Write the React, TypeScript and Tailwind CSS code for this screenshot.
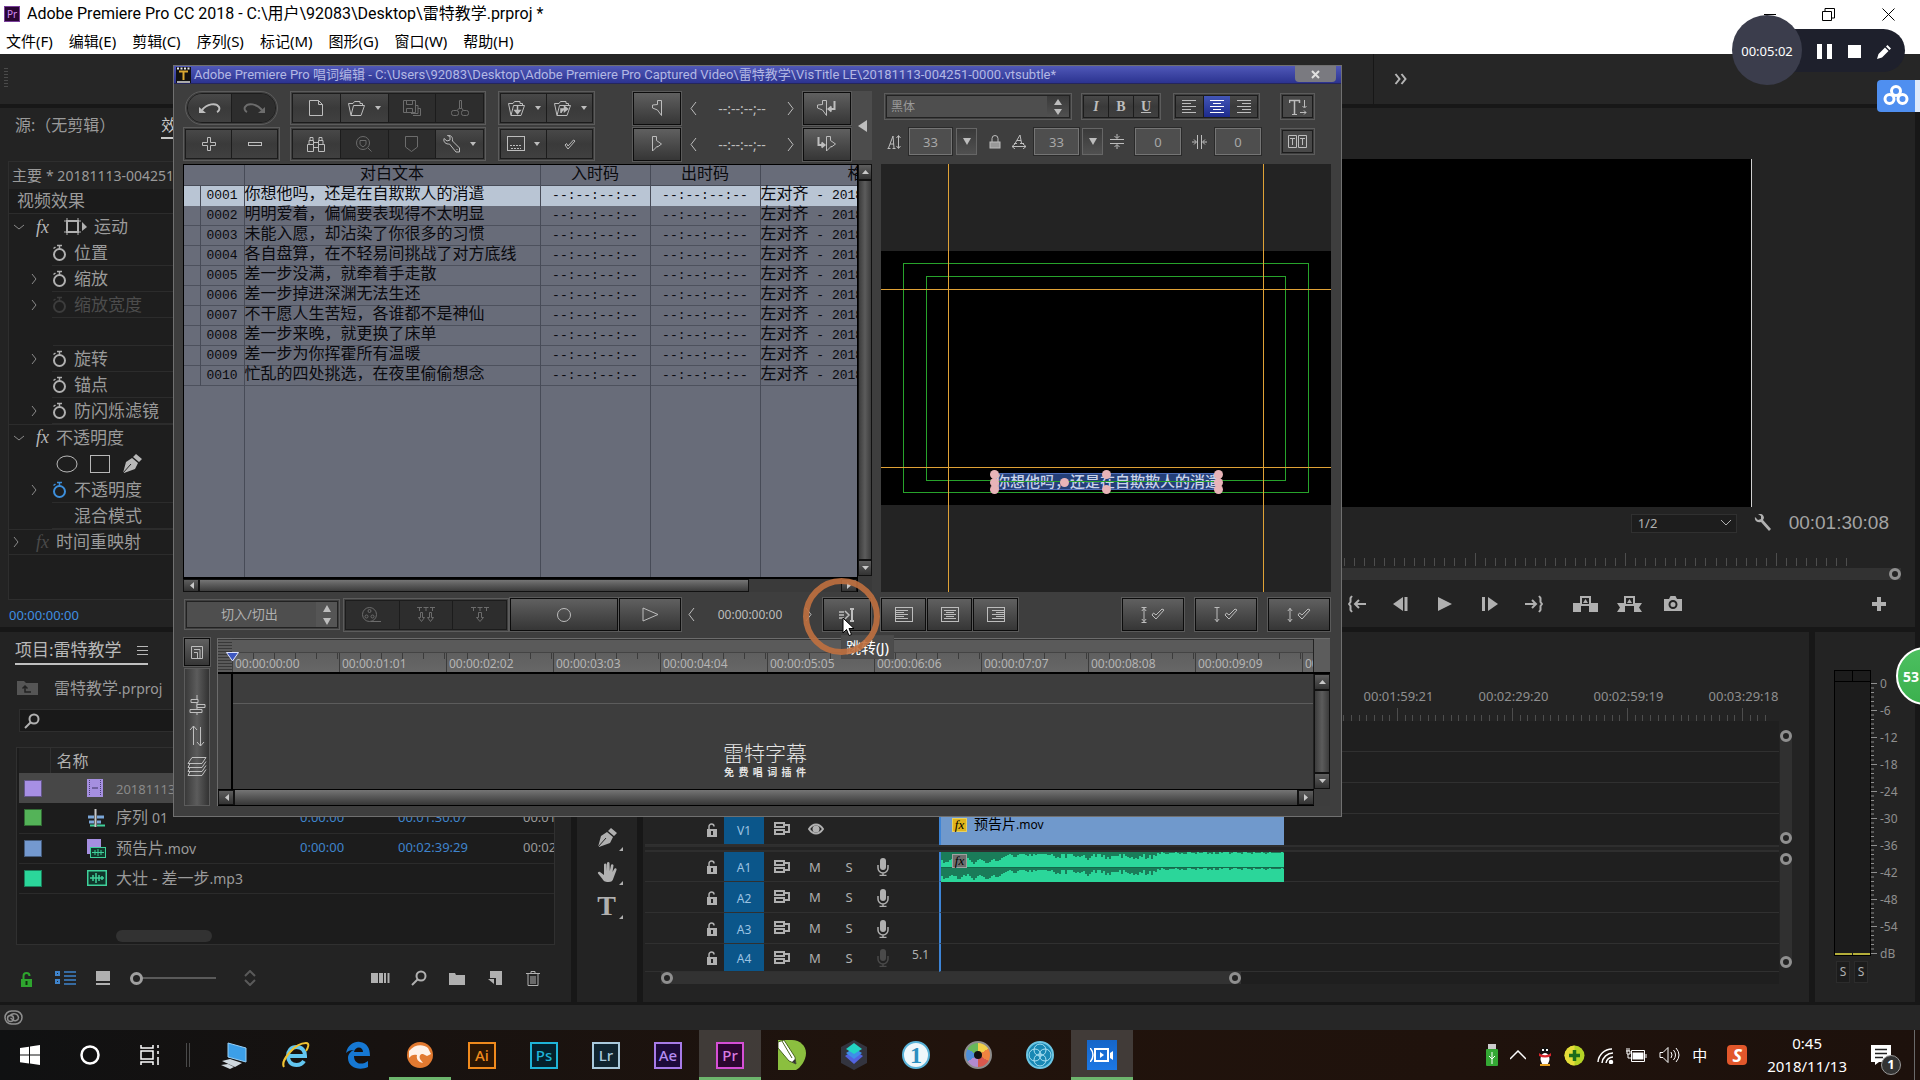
import React from "react";
import type { ReactNode } from "react";

const UI = "font-['Noto_Sans','Noto_Sans_CJK_SC',sans-serif]";
const MONO = "font-['Liberation_Mono','Noto_Sans_CJK_SC',monospace]";

function Ic({ w = 20, h = 20, sw = 1, className = "", children }: { w?: number; h?: number; sw?: number; className?: string; children: ReactNode }) {
  return (
    <svg width={w} height={h} viewBox={`0 0 ${w} ${h}`} fill="none" stroke="currentColor" strokeWidth={sw} className={`shrink-0 ${className}`} aria-hidden="true">
      {children}
    </svg>
  );
}

function Ticks({ start, step, count, major, offset = 0, short, tall }: { start: number; step: number; count: number; major: number; offset?: number; short: number; tall: number }) {
  const items = Array.from({ length: count }, (_, i) => i);
  return (
    <svg className="block w-full overflow-hidden" height={tall} aria-hidden="true">
      {items.map((i) => {
        const x = Math.round(start + i * step) + 0.5;
        const len = (i + offset) % major === 0 ? tall : short;
        return <line key={i} x1={x} x2={x} y1={tall - len} y2={tall} stroke="currentColor" />;
      })}
    </svg>
  );
}

/* ---------- application chrome ---------- */

function TitleBar() {
  const menus = ["文件(F)", "编辑(E)", "剪辑(C)", "序列(S)", "标记(M)", "图形(G)", "窗口(W)", "帮助(H)"];
  return (
    <header className="h-[54px] shrink-0 bg-white text-black">
      <div className="flex h-7 items-center gap-[7px] pl-1">
        <span className="flex h-4 w-4 items-center justify-center border border-[#7a3f9c] bg-[#2a0634] text-[10px] leading-none text-[#d58cf5]">Pr</span>
        <h1 className="flex-1 font-['Roboto','Noto_Sans_CJK_SC',sans-serif] text-[16px] leading-5">Adobe Premiere Pro CC 2018 - C:\用户\92083\Desktop\雷特教学.prproj *</h1>
        <div className="flex items-center pr-[25px]">
          <button aria-label="最小化" className="mr-[46px]"><Ic w={12} h={12}><path d="M0 6.5h12" /></Ic></button>
          <button aria-label="向下还原" className="mr-[47px]"><Ic w={13} h={13}><path d="M.5 3.5h9v9h-9zM3 3V.5h9.500V10H10" /></Ic></button>
          <button aria-label="关闭"><Ic w={13} h={13}><path d="M.5.5l12 12M12.500.5l-12 12" /></Ic></button>
        </div>
      </div>
      <nav className="flex gap-4 pt-px pl-[6px]">
        {menus.map((m) => (
          <button key={m} className="text-[15px] leading-6">{m}</button>
        ))}
      </nav>
    </header>
  );
}

function WorkspaceBar() {
  return (
    <div className="flex h-[54px] shrink-0 border-b-4 border-[#171717] bg-[#262626]">
      <div className="mt-[14px] ml-1 h-5 w-1 bg-[repeating-linear-gradient(#4a4a4a_0_1px,transparent_1px_3px)]" />
      <div className="ml-auto w-[547px] border-l border-[#171717] pt-[18px] pl-5">
        <button aria-label="更多工作区" className="block text-[#b4b4b4]"><Ic w={14} h={14} sw={2}><path d="M1.500 2l4 5-4 5M7.500 2l4 5-4 5" /></Ic></button>
      </div>
    </div>
  );
}

/* ---------- effect controls ---------- */

const Stopwatch = ({ className = "text-[#b0b0b0]" }: { className?: string }) => (
  <Ic w={15} h={18} sw={2} className={className}><circle cx="7.500" cy="10.500" r="5.500" /><path d="M7.500 5V1M5 1.500h5M1.500 4.500l2-1.500" strokeWidth={1.500} /></Ic>
);
const Chevron = ({ open = false }: { open?: boolean }) => (
  <Ic w={10} h={12} className="text-[#8a8a8a]">{open ? <path d="M0 4l5 4 5-4" /> : <path d="M2 1l4 5-4 5" />}</Ic>
);
const Fx = ({ dim = false }: { dim?: boolean }) => (
  <span className={dim ? "w-4 font-['Liberation_Serif',serif] text-[18px] italic text-[#4a4a4a]" : "w-4 font-['Liberation_Serif',serif] text-[18px] italic text-[#b8b8b8]"}>fx</span>
);

function Prop({ label, arrow = false, dim = false, active = false, watch = true }: { label: string; arrow?: boolean; dim?: boolean; active?: boolean; watch?: boolean }) {
  return (
    <div className="flex h-[26px] items-center pl-[21px]">
      <span className="w-[22px]">{arrow && <Chevron />}</span>
      <span className="flex h-full flex-1 items-center border-b border-[#2c2c2c]">
        <span className="w-[22px]">{watch && <Stopwatch className={dim ? "text-[#3c3c3c]" : active ? "text-[#3d8fdc]" : "text-[#b0b0b0]"} />}</span>
        <span className={dim ? "text-[#4c4c4c]" : ""}>{label}</span>
      </span>
    </div>
  );
}

function EffectControls() {
  return (
    <section className="flex w-[571px] shrink-0 flex-col bg-[#232323] text-[#9a9a9a]">
      <div className="flex h-[53px] shrink-0 gap-[46px] pt-[5px] pl-[15px] text-[16px] leading-6">
        <button className="h-6">源:（无剪辑）</button>
        <button className="h-[26px] border-b-2 border-[#c8c8c8] text-[#c8c8c8]">效果控件</button>
      </div>
      <div className="ml-2 flex min-h-0 flex-1 flex-col border border-[#2e2e2e] bg-[#1e1e1e] text-[17px]">
        <div className="flex h-[27px] items-center bg-[#232323] pl-[3px] whitespace-nowrap"><span className="text-[15px]">主要</span><span className="pl-1 text-[14px]">* 20181113-004251-0000</span></div>
        <div className="flex h-[25px] items-center border-b border-[#2c2c2c] bg-[#1b1b1b] pl-2">视频效果</div>
        <div className="flex h-[26px] items-center pl-[5px]">
          <span className="w-[22px]"><Chevron open /></span><Fx />
          <Ic w={24} h={18} sw={2} className="mr-[6px] ml-[12px] text-[#b0b0b0]"><rect x="3" y="3" width="11" height="11" /><path d="M0 3h6M3 0v6M11 3h6M14 0v6M0 14h6M3 11v6M11 14h6M14 11v6" strokeWidth={1} /><path d="M18 4v9l5-4z" fill="currentColor" stroke="none" /></Ic>
          运动
        </div>
        <Prop label="位置" />
        <Prop label="缩放" arrow />
        <Prop label="缩放宽度" arrow dim />
        <div className="ml-11 h-[28px] border-b border-[#2c2c2c]" />
        <Prop label="旋转" arrow />
        <Prop label="锚点" />
        <Prop label="防闪烁滤镜" arrow />
        <div className="flex h-[26px] items-center border-t border-[#2c2c2c] pl-[5px]">
          <span className="w-[22px]"><Chevron open /></span><Fx /><span className="ml-[4px]">不透明度</span>
        </div>
        <div className="flex h-[27px] items-center gap-3 pl-[47px] text-[#b8b8b8]">
          <Ic w={22} h={18}><ellipse cx="11" cy="9" rx="10" ry="8" /></Ic>
          <Ic w={20} h={18}><rect x=".5" y=".5" width="19" height="17" /></Ic>
          <PenIcon />
        </div>
        <Prop label="不透明度" arrow active />
        <Prop label="混合模式" watch={false} />
        <div className="flex h-[26px] items-center border-y border-[#2c2c2c] pl-[3px]">
          <span className="w-[24px]"><Chevron /></span><Fx dim /><span className="ml-[4px]">时间重映射</span>
        </div>
      </div>
      <div className="flex h-[27px] shrink-0 items-center pt-1 pl-[9px] text-[13px] text-[#3f8fe0]">00:00:00:00</div>
    </section>
  );
}

const PenIcon = () => (
  <Ic w={20} h={20}><path d="M1 19l3-11 6-4 6 5-3 6-11 4zM11 3l3-3 6 5-3 3z" fill="currentColor" stroke="none" /><path d="M1 19l8-9" stroke="#232323" /></Ic>
);

/* ---------- program monitor ---------- */

const Knob = ({ className = "" }: { className?: string }) => <span className={`block h-3 w-3 rounded-full border-[3px] border-[#8f8f8f] bg-[#232323] ${className}`} />;

function ProgramMonitor() {
  const tools: { name: string; icon: ReactNode; gap?: boolean }[] = [
    { name: "转到入点", icon: <Ic w={19} h={18} sw={2}><path d="M4 1L2.500 3v4L1 9l1.500 2v4L4 17M7 9h11M11 5L7 9l4 4" /></Ic> },
    { name: "后退一帧", icon: <Ic w={17} h={16}><path d="M0 8l10-7v14z" fill="currentColor" stroke="none" /><path d="M13 1v14" strokeWidth={3} /></Ic> },
    { name: "播放", icon: <Ic w={16} h={16}><path d="M1 1l14 7-14 7z" fill="currentColor" stroke="none" /></Ic> },
    { name: "前进一帧", icon: <Ic w={17} h={16}><path d="M7 1l10 7-10 7z" fill="currentColor" stroke="none" /><path d="M2.500 1v14" strokeWidth={3} /></Ic> },
    { name: "转到出点", icon: <Ic w={19} h={18} sw={2}><path d="M15 1l1.500 2v4L18 9l-1.500 2v4L15 17M1 9h11M8 5l4 4-4 4" /></Ic> },
    { name: "提升", gap: true, icon: <Ic w={25} h={18}><path d="M0 8h8v9H0zM16 8h9v9h-9z" fill="currentColor" stroke="none" /><rect x="8" y="2" width="9" height="8" strokeWidth={2} /><path d="M10 8l2.500-4L15 8z" fill="currentColor" stroke="none" /></Ic> },
    { name: "提取", icon: <Ic w={25} h={18}><path d="M0 8h8v9H0l3-4.500zM17 8h8l-3 4.500 3 4.500h-8z" fill="currentColor" stroke="none" /><rect x="8" y="2" width="9" height="8" strokeWidth={2} /><path d="M10 8l2.500-4L15 8z" fill="currentColor" stroke="none" /></Ic> },
    { name: "导出帧", icon: <Ic w={18} h={16}><path d="M0 3h5l1.500-3h5L13 3h5v12H0z" fill="currentColor" stroke="none" /><circle cx="9" cy="8.500" r="3.500" stroke="#232323" strokeWidth={2} /></Ic> },
  ];
  return (
    <section className="mr-[5px] flex flex-1 flex-col bg-[#232323]">
      <div className="h-[51px] shrink-0" />
      <div className="mr-[163px] ml-[160px] min-h-0 flex-1 border-r border-[#d0d0d0] bg-black" />
      <div className="flex h-8 shrink-0 items-center justify-end pr-[26px] text-[#b0b0b0]">
        <div className="relative mr-[17px]">
          <select aria-label="回放分辨率" className="block h-[19px] w-[106px] appearance-none border border-[#303030] bg-[#1d1d1d] pl-[6px] text-[13px] leading-4">
            <option>1/2</option>
          </select>
          <Ic w={10} h={6} className="pointer-events-none absolute top-[6px] right-[6px]"><path d="M0 0l5 5 5-5" /></Ic>
        </div>
        <button aria-label="设置" className="mr-[17px]"><Ic w={18} h={18}><path d="M1 3l3 3 3-1 0-3-3-2c3-1 6 1 6 4l-1 2 8 9-2 2-8-9C4 9 0 7 1 3z" fill="currentColor" stroke="none" /></Ic></button>
        <output className="font-['Liberation_Sans',sans-serif] text-[19px] text-[#a4a4a4]">00:01:30:08</output>
      </div>
      <div className="mt-[14px] text-[#4d4d4d]"><Ticks start={5} step={10.04} count={127} major={15} offset={1} short={8} tall={13} /></div>
      <div className="mt-[2px] mr-[14px] flex h-3 shrink-0 items-center justify-end bg-[#323232]"><Knob /></div>
      <div className="mt-[6px] flex h-[41px] shrink-0 items-center justify-end pr-7 pb-[6px] text-[#b0b0b0]">
        {tools.map((t) => (
          <button key={t.name} aria-label={t.name} className={t.gap ? "ml-2 flex w-11 justify-center" : "flex w-11 justify-center"}>{t.icon}</button>
        ))}
        <button aria-label="按钮编辑器" className="ml-[176px]"><Ic w={16} h={16} sw={4}><path d="M8 1v14M1 8h14" /></Ic></button>
      </div>
    </section>
  );
}

/* ---------- project panel ---------- */

type Clip = { color: string; name: ReactNode; key: string; icon: ReactNode; start: string; end: string; out: string; selected?: boolean };
const Film = () => <Ic w={16} h={18}><rect x="0" y="0" width="16" height="18" fill="#a58fe0" stroke="none" /><path d="M2.500 1v16M13.500 1v16" stroke="#4a3d78" strokeDasharray="1 1" /><path d="M5 9h6" stroke="#3a3060" /></Ic>;
const clips: Clip[] = [
  { key: "c1", color: "bg-[#a78fe4]", name: <span className="text-[13px]">20181113-004251</span>, icon: <Film />, start: "", end: "", out: "", selected: true },
  { key: "c2", color: "bg-[#54b358]", name: <>序列<span className="pl-1 text-[14px]">01</span></>, icon: <Ic w={18} h={18} sw={3}><path d="M1 8h6M2 13h5" stroke="#7aa6d8" /><path d="M10 8h7M10 13h4" stroke="#7aa6d8" /><path d="M3 16.500h5M10 16.500h8" stroke="#3fd09a" strokeWidth={2} /><path d="M8.500 0v18" stroke="#c9c9c9" strokeWidth={2} /></Ic>, start: "0:00:00", end: "00:01:30:07", out: "00:01:30" },
  { key: "c3", color: "bg-[#7499cf]", name: <>预告片<span className="text-[14px]">.mov</span></>, icon: <Ic w={19} h={19}><rect width="14" height="15" fill="#a58fe0" stroke="none" /><rect x="3.500" y="8.500" width="15" height="10" fill="#123a2c" stroke="#3fd09a" /><path d="M5 13.500h12M8 11v5M11 10v7M14 11v5" stroke="#3fd09a" /></Ic>, start: "0:00:00", end: "00:02:39:29", out: "00:02:39" },
  { key: "c4", color: "bg-[#2bd69a]", name: <>大壮 - 差一步<span className="text-[14px]">.mp3</span></>, icon: <Ic w={20} h={16}><rect x=".5" y=".5" width="19" height="15" fill="#10352a" stroke="#3fd09a" strokeWidth={2} /><path d="M3 8h14M6 5v6M9 3v10M12 5v6M15 6v4" stroke="#3fd09a" strokeWidth={1.500} /></Ic>, start: "", end: "", out: "" },
];

function ProjectPanel() {
  const act = "flex w-[17px] justify-center";
  return (
    <section className="flex w-[571px] shrink-0 flex-col bg-[#232323] text-[#9a9a9a]">
      <div className="flex h-[34px] shrink-0 items-start pt-[5px] pl-[15px]">
        <button className="flex h-[28px] items-center gap-[15px] border-b-2 border-[#c0c0c0] text-[17px] text-[#b8b8b8]">项目:雷特教学
          <Ic w={11} h={10}><path d="M0 1.500h11M0 5.500h11M0 9.500h11" /></Ic>
        </button>
      </div>
      <div className="flex h-[43px] items-center gap-[16px] pl-[17px] text-[16px]">
        <Ic w={21} h={15} className="text-[#555]"><path d="M0 1h7l2 2h12v12H0z" fill="currentColor" stroke="none" /><path d="M14 12H8V6M5.500 8.500L8 6l2.500 2.500" stroke="#222" strokeWidth={1.500} /></Ic>
        <span>雷特教学<span className="text-[14px]">.prproj</span></span>
      </div>
      <label className="mr-4 ml-[19px] flex h-[23px] items-center gap-3 border border-[#2e2e2e] bg-[#191919] pl-[4px] text-[#b0b0b0]">
        <Ic w={16} h={16} sw={2}><circle cx="10" cy="6" r="4.500" /><path d="M6.500 9.500L1 15" /></Ic>
        <input aria-label="搜索项目" className="flex-1 bg-transparent text-[13px] outline-none" />
      </label>
      <div className="mt-[15px] mr-4 ml-4 flex min-h-0 flex-1 flex-col overflow-hidden border border-[#303030] bg-[#1c1c1c] pl-[2px]">
        <table className="w-full table-fixed border-collapse text-left text-[16px] whitespace-nowrap">
          <colgroup><col className="w-[31px]" /><col className="w-[250px]" /><col className="w-[98px]" /><col className="w-[125px]" /><col /></colgroup>
          <thead>
            <tr className="h-[25px] bg-[#222]">
              <th className="border-r border-[#303030]" aria-label="标签" /><th className="pl-[6px] font-normal text-[#b0b0b0]">名称</th>
              <th aria-label="媒体开始" /><th aria-label="媒体结束" /><th aria-label="持续时间" />
            </tr>
          </thead>
          <tbody>
            {clips.map((c) => (
              <tr key={c.key} className={c.selected ? "h-[30px] bg-[#474747]" : "h-[30px] border-b border-[#2b2b2b]"}>
                <td className="pl-[5px]"><span className={`block h-[17px] w-[18px] border border-black/40 ${c.color}`} /></td>
                <td className={c.selected ? "overflow-hidden text-[#8a8a8a]" : "overflow-hidden"}>
                  <span className="flex items-center pl-[37px] leading-6"><span className="w-[29px]">{c.icon}</span><span>{c.name}</span></span>
                </td>
                <td className="text-[13px] text-[#3f84cc]">{c.start}</td>
                <td className="text-[13px] text-[#3f84cc]">{c.end}</td>
                <td className="overflow-hidden text-[13px]">{c.out}</td>
              </tr>
            ))}
          </tbody>
        </table>
        <div className="mt-auto mb-[2px] ml-[97px] h-3 w-24 shrink-0 rounded-full bg-[#323232]" />
      </div>
      <div className="flex h-[57px] shrink-0 items-center pt-[9px] pr-[30px] pl-5 text-[#b0b0b0]">
        <button aria-label="项目可写" className="mt-[2px] mr-[22px] text-[#2ea52e]"><Ic w={13} h={15}><rect x="1" y="7" width="11" height="8" fill="currentColor" stroke="none" /><path d="M3.500 7V4a3 3 0 0 1 6 0" strokeWidth={2} /><path d="M6.500 9v4" stroke="#10300f" strokeWidth={2} /></Ic></button>
        <button aria-label="列表视图" className="mr-5 text-[#3f84cc]"><Ic w={21} h={14} sw={2}><rect x="1" y="1" width="3" height="3" /><rect x="1" y="9" width="3" height="3" /><path d="M9 1h12M9 5h12M9 9h12M9 13h12" strokeWidth={1.500} /></Ic></button>
        <button aria-label="图标视图" className="mr-5"><Ic w={14} h={14}><path d="M0 0h14v10H0zM0 12h14v2H0z" fill="currentColor" stroke="none" /></Ic></button>
        <input type="range" aria-label="缩放" min={0} max={100} defaultValue={0} className="h-3 w-[86px] appearance-none bg-[linear-gradient(#5a5a5a,#5a5a5a)] bg-[length:100%_2px] bg-center bg-no-repeat [&::-webkit-slider-thumb]:h-[13px] [&::-webkit-slider-thumb]:w-[13px] [&::-webkit-slider-thumb]:appearance-none [&::-webkit-slider-thumb]:rounded-full [&::-webkit-slider-thumb]:border-[3px] [&::-webkit-slider-thumb]:border-[#a0a0a0] [&::-webkit-slider-thumb]:bg-[#232323]" />
        <button aria-label="排序" className="ml-7 text-[#5a5a5a]"><Ic w={12} h={16} sw={2}><path d="M1 6l5-5 5 5M1 10l5 5 5-5" /></Ic></button>
        <div className="ml-auto flex items-center gap-[21px]">
          <button aria-label="自动匹配序列" className={act}><Ic w={19} h={12}><path d="M0 1h7v10H0zM8 1h4v10H8zM13 1h2v10h-2zM16.500 1h2v10h-2z" fill="currentColor" stroke="none" /></Ic></button>
          <button aria-label="查找" className={act}><Ic w={16} h={16} sw={2}><circle cx="10" cy="6" r="4.500" /><path d="M6.500 9.500L1 15" /></Ic></button>
          <button aria-label="新建素材箱" className={act}><Ic w={16} h={13}><path d="M0 1h6l1 2h9v10H0z" fill="currentColor" stroke="none" /></Ic></button>
          <button aria-label="新建项" className={act}><Ic w={14} h={14}><path d="M2 0h12v14H8V7H2z" fill="currentColor" stroke="none" /><path d="M0 8h6v5z" fill="currentColor" stroke="none" /></Ic></button>
          <button aria-label="清除" className={act}><Ic w={14} h={15}><path d="M0 2.500h14M5 2V.5h4V2M2 3v11.500h10V3M5 5v8M7 5v8M9 5v8" /></Ic></button>
        </div>
      </div>
    </section>
  );
}

function ToolsPanel() {
  const corner = <Ic w={4} h={4} className="mt-auto -mb-[3px] ml-[2px]"><path d="M4 0v4H0z" fill="currentColor" stroke="none" /></Ic>;
  return (
    <aside aria-label="工具" className="flex w-[60px] shrink-0 flex-col items-center justify-end gap-[14px] bg-[#232323] pb-[86px] pl-[5px] text-[#b0b0b0]">
      <button aria-label="钢笔工具" className="flex"><PenIcon />{corner}</button>
      <button aria-label="手形工具" className="flex">
        <Ic w={20} h={20}><path d="M3 10l4 3V2.500a1.300 1.300 0 0 1 2.500 0V9l.5-8a1.300 1.300 0 0 1 2.500 0l.3 8 1.200-6a1.300 1.300 0 0 1 2.500.5L15.500 10l1.700-3a1.200 1.200 0 0 1 2.300 1l-3 8c-1 3-2 4-5 4-4 0-5-1-6-3L1 11.500c-.6-1.500 1-2.300 2-1.500z" fill="currentColor" stroke="none" /></Ic>{corner}
      </button>
      <button aria-label="文字工具" className="flex">
        <span className="flex h-5 w-5 items-center justify-center font-['Liberation_Serif',serif] text-[28px] leading-5 font-bold">T</span>{corner}
      </button>
    </aside>
  );
}

/* ---------- timeline ---------- */

const TrackLock = () => <Ic w={12} h={14}><rect x="1" y="6" width="10" height="8" fill="currentColor" stroke="none" /><path d="M3 6V3.500a2.500 2.500 0 0 1 5 0" strokeWidth={1.500} /><path d="M6 8v4" stroke="#232323" strokeWidth={2} /></Ic>;
const SyncLock = () => <Ic w={16} h={14} sw={2}><path d="M1 1h9v4H1zM1 8h9v4H1zM10 3h5v7h-5" /></Ic>;
const Mic = () => <Ic w={12} h={18}><rect x="3" y="0" width="6" height="12" rx="3" fill="currentColor" stroke="none" /><path d="M1 7v3a5 5 0 0 0 10 0V7M6 15v2.500M2.500 17.500h7" strokeWidth={1.500} /></Ic>;

const wave = Array.from({ length: 172 }, (_, i) => {
  const r = Math.abs(Math.sin(i * 12.9898) * 43758.5453) % 1;
  if (i < 28) return 8 + Math.round(Math.sin(i * 0.9) * 2 + r * 2);
  if (i < 34) return 10 - Math.round((i - 27) * 1.2);
  if (i < 108) return 2 + Math.round(r * r * (i > 55 ? 6 : 3));
  return Math.round(r * 2);
});

function AudioClip() {
  const path = (base: number) => `M0 ${base}` + wave.map((v, i) => `L${i * 2} ${base + v}H${i * 2 + 2}`).join("") + `V${base}z`;
  return (
    <div className="relative h-[30px] w-[343px] bg-[#2bd69a]">
      <svg className="block h-[30px] w-full" viewBox="0 0 343 30" preserveAspectRatio="none" aria-hidden="true">
        <path d={path(0)} fill="#1a7c59" /><path d={path(16)} fill="#1a7c59" /><path d="M0 15.500h343" stroke="#14694b" />
      </svg>
      <span className="absolute top-[2px] left-[11px] h-[14px] w-[15px] border border-[#a0a0a0] bg-[#6d6d6d] text-center font-['Liberation_Serif',serif] text-[13px] leading-[11px] text-black italic">fx</span>
    </div>
  );
}

function TrackHead({ name, kind }: { name: string; kind: "video" | "audio" | "muted" }) {
  return (
    <div className="flex w-[294px] shrink-0 items-center border-b border-[#303030] text-[#b0b0b0]">
      <button aria-label={`锁定 ${name}`} className="ml-[61px] w-[18px] pt-px"><TrackLock /></button>
      <button className="h-full w-10 bg-[#0b568a] pt-[3px] text-[12px] text-[#9cc3e2]">{name}</button>
      <button aria-label={`同步锁定 ${name}`} className="ml-[10px] w-4"><SyncLock /></button>
      {kind === "video" ? (
        <button aria-label="切换轨道输出" className="ml-[18px]"><Ic w={16} h={12} sw={2}><path d="M1 6c4-6 10-6 14 0-4 6-10 6-14 0z" /><circle cx="8" cy="6" r="2.500" fill="currentColor" /></Ic></button>
      ) : (
        <>
          <button className="ml-[13px] w-6 pt-[2px] text-[13px]">M</button>
          <button className="ml-[10px] w-6 pt-[2px] text-[13px]">S</button>
          <button aria-label={`画外音 ${name}`} className={kind === "muted" ? "ml-4 pt-px text-[#4a4a4a]" : "ml-4 pt-px"}><Mic /></button>
        </>
      )}
      {kind === "muted" && <span className="ml-auto pr-[10px] pb-[6px] text-[12px]">5.1</span>}
    </div>
  );
}

function TimelinePanel() {
  const labels = ["00:00:29:23", "00:00:59:22", "00:01:29:21", "00:01:59:21", "00:02:29:20", "00:02:59:19", "00:03:29:18"];
  return (
    <section className="flex min-w-0 flex-1 bg-[#232323] pl-[2px]">
      <div className="flex min-w-0 flex-1 flex-col overflow-hidden">
        <div className="ml-[294px] flex h-[89px] shrink-0 flex-col justify-end text-[13px] text-[#8f8f8f]">
          <div className="ml-[57px] flex pb-[2px]">
            {labels.map((l) => <span key={l} className="w-[115px] shrink-0 text-center leading-5">{l}</span>)}
          </div>
          <div className="text-[#4d4d4d]"><Ticks start={-2} step={7.667} count={109} major={15} short={6} tall={13} /></div>
        </div>
        {[0, 1, 2].map((i) => (
          <div key={i} className="flex h-[31px] shrink-0"><div className="w-[294px] border-b border-[#303030]" /><div className="flex-1 border-b border-[#303030] bg-[#1f1f1f]" /></div>
        ))}
        <div className="flex h-[31px] shrink-0">
          <TrackHead name="V1" kind="video" />
          <div className="flex-1 border-l-2 border-[#3d84d6] bg-[#1f1f1f]">
            <div className="flex h-[31px] w-[343px] items-start gap-[7px] bg-[#7099cc] pl-[11px] text-black">
              <span className="mt-1 h-[14px] w-[15px] border border-[#e8cf60] bg-[#e0b51c] text-center font-['Liberation_Serif',serif] text-[13px] leading-[11px] italic">fx</span>
              <span className="text-[14px] leading-5">预告片<span className="text-[12px]">.mov</span></span>
            </div>
          </div>
        </div>
        <div className="h-[7px] shrink-0 border-y-2 border-[#2e2e2e] bg-[#232323]" />
        {[
          { n: "A1", h: "h-[30px]" }, { n: "A2", h: "h-[31px]" }, { n: "A3", h: "h-[31px]" }, { n: "A4", h: "h-[28px]" },
        ].map((t) => (
          <div key={t.n} className={`flex shrink-0 ${t.h}`}>
            <TrackHead name={t.n} kind={t.n === "A4" ? "muted" : "audio"} />
            <div className="flex-1 border-b border-l-2 border-b-[#303030] border-l-[#3d84d6] bg-[#1f1f1f]">{t.n === "A1" && <AudioClip />}</div>
          </div>
        ))}
        <div className="flex h-3 shrink-0 bg-[#1f1f1f]">
          <div className="w-4 bg-[#232323]" />
          <div className="flex w-[580px] justify-between bg-[#323232]"><Knob /><Knob /></div>
        </div>
      </div>
      <div className="mr-4 flex w-[14px] shrink-0 flex-col items-center pt-[98px] pb-[34px]">
        <div className="flex h-[114px] flex-col justify-between rounded-full bg-[#303030]"><Knob /><Knob /></div>
        <div className="mt-[9px] flex h-[115px] flex-col justify-between rounded-full bg-[#303030]"><Knob /><Knob /></div>
      </div>
    </section>
  );
}

function AudioMeters() {
  const db = ["0", "-6", "-12", "-18", "-24", "-30", "-36", "-42", "-48", "-54", "dB"];
  return (
    <aside aria-label="音频仪表" className="mr-[5px] flex w-[100px] shrink-0 flex-col bg-[#232323] pt-[38px] pl-[19px] text-[12px] text-[#8f8f8f]">
      <div className="flex">
        <div className="flex h-[286px] w-[37px] flex-col border border-black bg-[#1c1c1c]">
          <div className="flex h-[11px] justify-center border-b border-black"><div className="w-px bg-black" /></div>
          <div className="mt-auto flex h-[2px] gap-px"><div className="flex-1 bg-[#b4ae3a]" /><div className="flex-1 bg-[#b4ae3a]" /></div>
        </div>
        <svg width="6" height="286" className="mt-[13px] mr-[3px] text-[#8f8f8f]" aria-hidden="true">
          {Array.from({ length: 61 }, (_, i) => <line key={i} x1="0" x2={i % 6 === 0 ? 6 : 3} y1={i * 4.5 + 0.5} y2={i * 4.5 + 0.5} stroke="currentColor" strokeWidth="1" />)}
        </svg>
        <div>{db.map((d) => <div key={d} className="h-[27px] leading-[27px]">{d}</div>)}</div>
      </div>
      <div className="-mt-2 flex gap-1 pl-[2px]">
        {["左", "右"].map((c) => <button key={c} aria-label={`独奏 ${c}`} className="h-[22px] w-[14px] border border-[#2c2c2c] bg-[#1c1c1c] text-[#b0b0b0]">S</button>)}
      </div>
    </aside>
  );
}

/* ---------- subtitle editor window ---------- */

const cell = "flex h-full items-center justify-center border-r border-[#1c1c1c] bg-linear-to-b from-[#484848] via-[#3a3a3a] to-[#404040] last:border-r-0";
const cellOff = "flex h-full items-center justify-center border-r border-[#1c1c1c] bg-[#2d2d2d] text-[#6c6c6c] last:border-r-0";
const big = "flex items-center justify-center border border-[#0c0c0c] bg-linear-to-b from-[#606060] to-[#363636] text-[#bdbdbd] outline outline-[#5a5a5a]";
const Drop = () => <Ic w={6} h={4} className="ml-[9px]"><path d="M0 0h6L3 4z" fill="currentColor" stroke="none" /></Ic>;

function Group({ className, children }: { className: string; children: ReactNode }) {
  return (
    <div className={`border border-[#5c5c5c] p-px ${className}`}>
      <div className="flex h-full border border-[#1c1c1c]">{children}</div>
    </div>
  );
}

function EditorToolbar() {
  const folder = <path d="M4 15.500L1.500 3.500H6L7.500 1.500H13V3.500H15.500V5.500M4 15.500H14L17.500 5.500H6.500z" />;
  return (
    <div className="flex h-20 shrink-0 pt-[7px] text-[#bdbdbd]">
      <div className="flex w-[97px] flex-col gap-[2px]">
        <div className="ml-[2px] flex h-[34px] w-[93px] overflow-hidden rounded-full border border-[#5c5c5c] p-px">
          <div className="flex flex-1 overflow-hidden rounded-full border border-[#1c1c1c]">
            <button aria-label="撤销" className={`flex-1 ${cell}`}><Ic w={22} h={12} sw={2}><path d="M3 8C8 2 17 0 20 5c1 2 0 4-2 5" /><path d="M0 5v6h7z" fill="currentColor" stroke="none" /></Ic></button>
            <button aria-label="重做" className={`flex-1 ${cellOff}`}><Ic w={22} h={12} sw={2}><path d="M19 8C14 2 5 0 2 5c-1 2 0 4 2 5" /><path d="M22 5v6h-7z" fill="currentColor" stroke="none" /></Ic></button>
          </div>
        </div>
        <Group className="h-[34px]">
          <button aria-label="添加" className={`flex-1 ${cell}`}><Ic w={14} h={14}><path d="M5.500.5h3v5h5v3h-5v5h-3v-5h-5v-3h5z" /></Ic></button>
          <button aria-label="删除" className={`flex-1 ${cell}`}><Ic w={14} h={5}><rect x=".5" y=".5" width="13" height="3" /></Ic></button>
        </Group>
      </div>
      <div className="ml-[10px] flex w-[196px] flex-col gap-[2px]">
        <Group className="h-[34px]">
          <button aria-label="新建" className={`flex-1 ${cell}`}><Ic w={14} h={16}><path d="M.5.5h9l4 4v11H.5zM9.500.5v4h4" /></Ic></button>
          <button aria-label="打开" className={`flex-1 ${cell}`}><Ic w={19} h={17}>{folder}</Ic><Drop /></button>
          <button aria-label="保存" className={`flex-1 ${cellOff}`}><Ic w={18} h={16}><path d="M.5.5h12v12H.5zM3.500.5v4h6v-4M3.500 12.500v-4h6v4M13 5.500h2v8h-7M15 8.500h2.500v7H10" /></Ic></button>
          <button aria-label="剪切" className={`flex-1 ${cellOff}`}><Ic w={18} h={16}><path d="M8.500.5h2v8h-2zM8.500 8L6 10.500M10.500 8l2 2.500" /><rect x=".5" y="10.500" width="7" height="5" rx="2" /><rect x="10.500" y="10.500" width="7" height="5" rx="2" /></Ic></button>
        </Group>
        <Group className="h-[34px]">
          <button aria-label="查找" className={`flex-1 ${cell}`}><Ic w={18} h={16}><path d="M.5 8.500h6v7h-6zM11.500 8.500h6v7h-6zM2 8.500v-4h4.500v4M11.500 8.500v-4H16v4M3 4.500v-3h3v3M12 4.500v-3h3v3M6.500 6.500h5v5h-5" /></Ic></button>
          <button aria-label="查找标记" className={`flex-1 ${cellOff}`}><Ic w={16} h={16}><circle cx="7" cy="7" r="6.500" /><path d="M4 4.500h6v4L7 11 4 8.500zM12 12l3.500 3.500" /></Ic></button>
          <button aria-label="标记" className={`flex-1 ${cellOff}`}><Ic w={13} h={16}><path d="M.5.5h12V11l-6 4.500L.5 11z" /></Ic></button>
          <button aria-label="设置" className={`flex-1 ${cell}`}><Ic w={18} h={18}><path d="M1 3.500l3 2.500 3-1V1.500L4.500.5C8 0 10 2 9.500 6l7 7v4h-3.500L6.500 9C3 9.500 0 7 1 3.500zM13.500 14.500h1" /></Ic><Drop /></button>
        </Group>
      </div>
      <div className="ml-[12px] flex w-[97px] flex-col gap-[2px]">
        <Group className="h-[34px]">
          <button aria-label="导入" className={`flex-1 ${cell}`}><Ic w={19} h={17}>{folder}<path d="M10.500 6v7M8 10.500l2.500 3 2.500-3z" fill="currentColor" strokeWidth={1.500} /></Ic><Drop /></button>
          <button aria-label="导出" className={`flex-1 ${cell}`}><Ic w={19} h={17}>{folder}<path d="M8 13V9h4M11.500 6.500l3 2.500-3 2.500z" fill="currentColor" strokeWidth={1.500} /></Ic><Drop /></button>
        </Group>
        <Group className="h-[34px]">
          <button aria-label="字幕框" className={`flex-1 ${cell}`}><Ic w={18} h={16}><rect x=".5" y=".5" width="17" height="14" /><path d="M3 9.500h12M4 12.500h10" strokeDasharray="2 1" /></Ic><Drop /></button>
          <button aria-label="应用" className={`flex-1 ${cell}`}><Ic w={12} h={11}><path d="M1 6l3 4 7-8-1.500-1L4 7 2.500 4.500z" /></Ic></button>
        </Group>
      </div>
      <div className="ml-[38px] flex w-[218px] flex-col gap-[2px]">
        {[0, 1].map((r) => (
          <div key={r} className="flex h-[34px] items-center justify-between">
            <button aria-label={r ? "设置出点" : "设置入点"} className={`h-[33px] w-[48px] ${big}`}>
              <Ic w={12} h={16}>{r ? <path d="M1.500.5h4v4l5 3.500-4 3v-1l-5 5z" /> : <path d="M10.500.5h-4v4l-5 .5v3l5 2 4 5.500z" />}</Ic>
            </button>
            <button aria-label="减少"><Ic w={7} h={13}><path d="M6 0L1 6.500 6 13" /></Ic></button>
            <output className="w-[72px] text-center text-[14px] whitespace-nowrap">--:--:--;--</output>
            <button aria-label="增加"><Ic w={7} h={13}><path d="M1 0l5 6.500L1 13" /></Ic></button>
            <button aria-label={r ? "转到出点" : "转到入点"} className={`h-[33px] w-[48px] ${big}`}>
              <Ic w={20} h={16}>{r ? <><path d="M9.500.5h4v4l5 3.500-4 3v-1l-5 5z" /><path d="M1.500 1v8H7M4.500 6.500l3 2.500-3 2.500" strokeWidth={2} /></> : <><path d="M9.500.5h-4v4l-5 .5v3l5 2 4 5.500z" /><path d="M17.500 1v8H12M14.500 6.500l-3 2.500 3 2.500" strokeWidth={2} /></>}</Ic>
            </button>
          </div>
        ))}
      </div>
      <button aria-label="折叠" className="ml-px flex h-[69px] w-5 items-center justify-center bg-[#4c4c4c]"><Ic w={9} h={12}><path d="M9 0v12L0 6z" fill="currentColor" stroke="none" /></Ic></button>
    </div>
  );
}

const lines = ["你想他吗，还是在自欺欺人的消遣", "明明爱着，偏偏要表现得不太明显", "未能入愿，却沾染了你很多的习惯", "各自盘算，在不轻易间挑战了对方底线", "差一步没满，就牵着手走散", "差一步掉进深渊无法生还", "不干愿人生苦短，各谁都不是神仙", "差一步来晚，就更换了床单", "差一步为你挥霍所有温暖", "忙乱的四处挑选，在夜里偷偷想念"];

const sbtn = "flex shrink-0 items-center justify-center border border-[#111] bg-linear-to-b from-[#5e5e5e] to-[#333] text-[#c8c8c8]";

function SubtitleTable() {
  return (
    <div className="flex min-h-0 flex-1">
      <div className="flex w-[674px] flex-col">
        <div className="min-h-0 flex-1 overflow-hidden border-t border-l border-black bg-[#686c79]">
          <table className={`h-full w-[783px] table-fixed border-collapse text-[16px] leading-5 whitespace-nowrap text-[#0a0a0e] ${MONO}`}>
            <colgroup><col className="w-[16px]" /><col className="w-[44px]" /><col className="w-[296px]" /><col className="w-[110px]" /><col className="w-[110px]" /><col className="w-[207px]" /></colgroup>
            <thead>
              <tr className="h-5 border-b border-[#474b57]">
                <th colSpan={2} aria-label="序号" className="border-r border-[#474b57]" />
                {["对白文本", "入时码", "出时码", "格式"].map((h) => <th key={h} className="border-r border-[#474b57] p-0 font-normal">{h}</th>)}
              </tr>
            </thead>
            <tbody>
              {lines.map((l, i) => (
                <tr key={l} className={i === 0 ? "h-5 bg-[#b9c5d4] leading-[19px]" : "h-5 border-b border-[#4d515d] leading-[19px]"}>
                  <td className="border-r border-[#474b57] p-0" />
                  <td className="border-r border-[#474b57] p-0 text-center text-[13px]">{String(i + 1).padStart(4, "0")}</td>
                  <td className="border-r border-[#474b57] p-0">{l}</td>
                  <td className="border-r border-[#474b57] p-0 text-center text-[13px]">--:--:--:--</td>
                  <td className="border-r border-[#474b57] p-0 text-center text-[13px]">--:--:--:--</td>
                  <td className="p-0">左对齐<span className="text-[13px]"> - 20181113</span></td>
                </tr>
              ))}
              <tr aria-hidden="true"><td colSpan={2} className="border-r border-[#474b57]" /><td className="border-r border-[#474b57]" /><td className="border-r border-[#474b57]" /><td className="border-r border-[#474b57]" /><td /></tr>
            </tbody>
          </table>
        </div>
        <div className="flex h-[15px] shrink-0 border-t-2 border-black bg-[#3a3a3a]">
          <button aria-label="向左滚动" className={`w-4 ${sbtn}`}><Ic w={5} h={7}><path d="M5 0v7L1 3.500z" fill="currentColor" stroke="none" /></Ic></button>
          <div className="w-[550px] border border-[#111] bg-linear-to-b from-[#757575] to-[#3c3c3c]" />
          <button aria-label="向右滚动" className={`ml-auto w-4 ${sbtn}`}><Ic w={5} h={7}><path d="M0 0v7l4-3.500z" fill="currentColor" stroke="none" /></Ic></button>
        </div>
      </div>
      <div className="flex w-[15px] flex-col border-l border-black bg-[#3a3a3a] pb-4">
        <button aria-label="向上滚动" className={`h-4 ${sbtn}`}><Ic w={7} h={5}><path d="M0 4h7L3.500 0z" fill="currentColor" stroke="none" /></Ic></button>
        <div className="flex-1 border border-[#111] bg-linear-to-r from-[#3c3c3c] via-[#5c5c5c] to-[#3c3c3c]" />
        <button aria-label="向下滚动" className={`h-4 ${sbtn}`}><Ic w={7} h={5}><path d="M0 0h7L3.500 4z" fill="currentColor" stroke="none" /></Ic></button>
      </div>
    </div>
  );
}

const field = "h-[27px] border border-[#757575] bg-[#4e4e4e] text-center text-[13px] text-[#a8a8a8] outline outline-[#2a2a2a]";

function TextToolbar() {
  const bars = (w: number[], align: "l" | "c" | "r") => (
    <Ic w={14} h={14}>{w.map((n, i) => { const x = align === "l" ? 0 : align === "c" ? (14 - n) / 2 : 14 - n; return <path key={i} d={`M${x} ${i * 3 + 0.5}h${n}`} />; })}</Ic>
  );
  const drop = "flex h-[27px] w-[21px] items-center justify-center border border-[#666] bg-linear-to-b from-[#3a3a3a] to-[#505050]";
  return (
    <div className="h-20 shrink-0 pt-[9px] pr-4 text-[#bdbdbd]">
      <div className="flex h-[27px]">
        <div className="relative ml-[3px] flex w-[188px] border border-[#5c5c5c] p-px">
          <select aria-label="字体" className="h-full w-full appearance-none border border-[#222] bg-[#4e4e4e] pl-[4px] text-[12px] text-[#9a9a9a]"><option>黑体</option></select>
          <span className="pointer-events-none absolute inset-y-[2px] right-[2px] flex w-[22px] items-center justify-center bg-linear-to-b from-[#3a3a3a] to-[#505050]"><Ic w={8} h={16}><path d="M0 6h8L4 0zM0 10h8l-4 6z" fill="currentColor" stroke="none" /></Ic></span>
        </div>
        <Group className="ml-[9px] w-[80px]">
          <button aria-label="斜体" className={`flex-1 font-['Liberation_Serif',serif] text-[14px] font-bold italic ${cell}`}>I</button>
          <button aria-label="粗体" className={`flex-1 font-['Liberation_Serif',serif] text-[14px] font-bold ${cell}`}>B</button>
          <button aria-label="下划线" className={`flex-1 font-['Liberation_Serif',serif] text-[14px] font-bold underline ${cell}`}>U</button>
        </Group>
        <Group className="ml-[12px] w-[87px]">
          <button aria-label="左对齐" className={`flex-1 ${cell}`}>{bars([14, 9, 14, 9, 14], "l")}</button>
          <button aria-label="居中" aria-pressed="true" className="flex h-full flex-1 items-center justify-center bg-linear-to-b from-[#4356b8] to-[#1e2b8c] text-white">{bars([14, 8, 14, 8, 14], "c")}</button>
          <button aria-label="右对齐" className={`flex-1 ${cell}`}>{bars([14, 9, 14, 9, 14], "r")}</button>
        </Group>
        <Group className="ml-auto w-[35px]">
          <button aria-label="文字方向" className="flex flex-1 items-center justify-center bg-[#484848]"><Ic w={18} h={16}><path d="M0 1.500h11M.5 1v3M10.500 1v3M5.500 1v14" strokeWidth={1.500} /><path d="M3 15.500h5M15.500 1v7M13.500 7l2 2 2-2M11 13.500h6M15 11.500l2 2-2 2" /></Ic></button>
        </Group>
      </div>
      <div className="mt-[8px] flex h-[27px] items-center">
        <Ic w={14} h={14} className="ml-[6px]"><path d="M.5 13.500h3M5.500 13.500h3M1.500 13L6 1l1 12M3 9h4M11.500 1v12M9.500 3l2-2.500 2 2.500M9.500 11l2 2.500 2-2.500" /></Ic>
        <input aria-label="字高" defaultValue="33" className={`ml-2 w-[43px] ${field}`} />
        <button aria-label="字高列表" className={`ml-1 ${drop}`}><Ic w={8} h={7}><path d="M0 0h8L4 7z" fill="currentColor" stroke="none" /></Ic></button>
        <Ic w={12} h={14} className="ml-[12px]"><rect x="1" y="7" width="10" height="6" fill="#999" /><path d="M3 7V3.500a3 3 0 0 1 6 0V7" /></Ic>
        <Ic w={14} h={15} className="ml-[11px]"><path d="M3 9.500L8 1l1.500 8M5 6.500h4M2 9.500h3M8 9.500h4M0 12.500h14M3 10l-3 2.500L3 15M11 10l3 2.500-3 2.500" /></Ic>
        <input aria-label="字宽" defaultValue="33" className={`ml-[8px] w-[45px] ${field}`} />
        <button aria-label="字宽列表" className={`ml-[3px] ${drop}`}><Ic w={8} h={7}><path d="M0 0h8L4 7z" fill="currentColor" stroke="none" /></Ic></button>
        <Ic w={14} h={15} className="ml-[7px]"><path d="M0 5.500h14M0 9.500h14M7 0v4M4.500 2L7 4.500 9.500 2M7 15v-4M4.500 13L7 10.500 9.500 13" /></Ic>
        <input aria-label="行距" defaultValue="0" className={`ml-[11px] w-[46px] ${field}`} />
        <Ic w={15} h={14} className="ml-[11px]"><path d="M5.500 0v14M9.500 0v14M0 7h4M2 4.500L4.500 7 2 9.500M15 7h-4M13 4.500L10.500 7l2.500 2.500" /></Ic>
        <input aria-label="字距" defaultValue="0" className={`ml-2 w-[46px] ${field}`} />
        <Group className="ml-auto h-[27px] w-[35px]">
          <button aria-label="文字样式" className="flex flex-1 items-center justify-center bg-[#484848]"><Ic w={20} h={13}><path d="M.5.5h8v12h-8zM10.500.5h8v12h-8zM2 3.500h5M4.500 3v7M12 3.500h5M14.500 3v7" /></Ic></button>
        </Group>
      </div>
    </div>
  );
}

function Preview() {
  return (
    <div className="relative flex-1 bg-[#232323] py-[87px]">
      <div className="relative h-full bg-black">
        <div className="absolute inset-x-[22px] top-[12px] bottom-[12px] border border-[#27a32b]" />
        <div className="absolute inset-x-[45px] top-[25px] bottom-[24px] border border-[#27a32b]" />
        <div className="absolute top-[222px] left-[113px] h-[17px] w-[225px] border border-[#4a6bb8] bg-[#243f78]">
          <p className="text-center text-[15px] leading-[15px] font-medium whitespace-nowrap text-[#c9d3ea]">你想他吗，还是在自欺欺人的消遣</p>
          <div className="absolute inset-x-0 top-[7px] h-px bg-[#27a32b]" />
          {["-top-[4px] -left-[5px]", "top-[4px] -left-[5px]", "-bottom-[5px] -left-[5px]", "-top-[4px] left-[107px]", "-bottom-[5px] left-[107px]", "-top-[4px] -right-[5px]", "top-[4px] -right-[5px]", "-bottom-[5px] -right-[5px]", "top-[4px] left-[65px]"].map((p) => (
            <span key={p} className={`absolute h-[9px] w-[9px] rounded-full bg-[#e8b4b8] ${p}`} />
          ))}
        </div>
      </div>
      <div className="absolute inset-y-0 left-[67px] w-px bg-[#e0a236]" />
      <div className="absolute inset-y-0 right-[67px] w-px bg-[#e0a236]" />
      <div className="absolute inset-x-0 top-[125px] h-px bg-[#e0a236]" />
      <div className="absolute inset-x-0 top-[303px] h-px bg-[#e0a236]" />
    </div>
  );
}

function ControlBar() {
  const check = <path d="M11 8l4 4 8-9-2-1-6 6-2.500-2z" />;
  const box = (align: "l" | "c" | "r") => (
    <Ic w={18} h={15}><rect x=".5" y=".5" width="17" height="14" />{[12, 8, 12, 8, 12].map((n, i) => { const x = align === "l" ? 1 : align === "c" ? 9 - n / 2 : 17 - n; return <path key={i} d={`M${x} ${i * 2 + 3.5}h${n}`} />; })}</Ic>
  );
  const ttt = (one: boolean) => <Ic w={18} h={17}><path d="M0 1.500h5M2.500 1v4M6.500 1.500h5M9 1v4M13 1.500h5M15.500 1v4" />{one ? <path d="M7.500 6.500h3v5h2L9 15.500l-3.500-4h2z" /> : <path d="M3.500 6.500h2v5h2l-3 4-3-4h2zM12.500 6.500h2v5h2l-3 4-3-4h2z" />}</Ic>;
  return (
    <div className="flex h-[35px] shrink-0 items-center text-[#bdbdbd]">
      <div className="relative ml-[10px] h-[31px] w-[156px] border border-[#5c5c5c] p-px">
        <select aria-label="切换方式" className="h-full w-full appearance-none border border-[#222] bg-[#4e4e4e] pl-[34px] text-[13px] text-[#b0b0b0]"><option>切入/切出</option></select>
        <span className="pointer-events-none absolute inset-y-[2px] right-[2px] flex w-[21px] items-center justify-center bg-[#555]"><Ic w={8} h={20}><path d="M0 7h8L4 0zM0 13h8l-4 7z" fill="currentColor" stroke="none" /></Ic></span>
      </div>
      <Group className="ml-[3px] h-[34px] w-[166px]">
        <button aria-label="录制" className={`flex-1 ${cellOff}`}><Ic w={20} h={15}><circle cx="7.500" cy="7.500" r="7" /><circle cx="7.500" cy="4" r="1.500" /><circle cx="4.500" cy="9.500" r="1.500" /><circle cx="10.500" cy="9.500" r="1.500" /><path d="M9 14.500h10" /></Ic></button>
        <button aria-label="全部落下" className={`flex-1 ${cellOff}`}>{ttt(false)}</button>
        <button aria-label="落下" className={`flex-1 ${cellOff}`}>{ttt(true)}</button>
      </Group>
      <button aria-label="录音" className={`ml-px h-[33px] w-[108px] ${big}`}><Ic w={14} h={14}><circle cx="7" cy="7" r="6.500" /></Ic></button>
      <button aria-label="播放" className={`ml-px h-[33px] w-[62px] ${big}`}><Ic w={17} h={15}><path d="M1 1l15 6.500L1 14z" /></Ic></button>
      <button aria-label="后退" className="ml-[7px]"><Ic w={7} h={13}><path d="M6 0L1 6.500 6 13" /></Ic></button>
      <output className="w-[110px] text-center text-[12px]">00:00:00:00</output>
      <button aria-label="前进"><Ic w={7} h={13}><path d="M1 0l5 6.500L1 13" /></Ic></button>
      <button aria-label="跳转" className={`ml-[11px] h-[33px] w-[48px] ${big}`}><Ic w={16} h={14} sw={2}><path d="M0 4h5M0 7h5M0 10h5M6 3l4 4-4 4" strokeWidth={1.500} /><path d="M11 1h4M13 1v12M11 13h4" /></Ic></button>
      <div className="ml-[10px] flex gap-px">
        {(["l", "c", "r"] as const).map((a) => <button key={a} aria-label={a === "l" ? "块左对齐" : a === "c" ? "块居中" : "块右对齐"} className={`h-[33px] w-[45px] ${big}`}>{box(a)}</button>)}
      </div>
      <div className="mr-[11px] ml-auto flex gap-[11px]">
        <button aria-label="应用全部" className={`h-[33px] w-[62px] ${big}`}><Ic w={24} h={16}><path d="M.5.500h5M.5 15.500h5M3 1v14M.8 4L3 1.500 5.200 4M.8 12L3 14.500 5.200 12" />{check}</Ic></button>
        <button aria-label="应用向下" className={`h-[33px] w-[62px] ${big}`}><Ic w={24} h={16}><path d="M.5.5h5M3 1v14M.8 12L3 14.500 5.200 12" />{check}</Ic></button>
        <button aria-label="应用上下" className={`h-[33px] w-[62px] ${big}`}><Ic w={24} h={16}><path d="M3 1v14M.8 4L3 1.500 5.200 4M.8 12L3 14.500 5.200 12" />{check}</Ic></button>
      </div>
    </div>
  );
}

function EditorTimeline() {
  const times = ["00:00:00:00", "00:00:01:01", "00:00:02:02", "00:00:03:03", "00:00:04:04", "00:00:05:05", "00:00:06:06", "00:00:07:07", "00:00:08:08", "00:00:09:09", "00:00:10:10"];
  return (
    <div className="mt-[6px] mr-[11px] mb-[10px] ml-[10px] flex min-h-0 flex-1">
      <div className="mr-[7px] flex w-[26px] shrink-0 flex-col gap-[2px] text-[#c0c0c0]">
        <button aria-label="缩放时间线" className={`h-7 ${big}`}><Ic w={12} h={13}><path d="M.5.5h11v12H.5zM3 3.500h6v9M3 6.500h3.500v6" /></Ic></button>
        <div className="flex flex-1 flex-col items-center border border-[#5c5c5c] bg-linear-to-r from-[#3a3a3a] via-[#5c5c5c] to-[#333] pt-[26px]">
          <button aria-label="吸附"><Ic w={18} h={20}><path d="M9 0v20" /><path d="M3 4.500h7v3H3zM9 9.500h8v3H9zM2 14.500h12v3H2z" fill="#4a4a4a" /></Ic></button>
          <button aria-label="交换" className="mt-[10px]"><Ic w={16} h={22}><path d="M4.500 20V1M1 5l3.500-4L8 5M11.500 2v19M8 17l3.500 4 3.500-4" /></Ic></button>
          <button aria-label="图层" className="mt-[10px]"><Ic w={20} h={20}><path d="M5 .5h14l-4 6H1zM3 6.500l-2 4h14l4-6M3 10.500l-2 4h14l4-6M3 14.500l-2 4h14l4-6" /></Ic></button>
        </div>
      </div>
      <div className="flex min-w-0 flex-1 flex-col border-t border-l border-[#6c6c6c] bg-[#3d3d3d]">
        <div className="flex h-[35px] shrink-0 border-b-2 border-black bg-[#5a5a5a]">
          <div className="w-[14px] bg-[repeating-linear-gradient(#383838_0_1px,#5a5a5a_1px_3px)]" />
          <div className="flex min-w-0 flex-1 flex-col overflow-hidden border-r border-[#222]">
            <div className="h-[13px] shrink-0 border-t border-[#333]" />
            <div className="flex-1 border-t border-[#444] bg-linear-to-b from-[#5f5f5f] to-[#686868]">
              <div className="flex text-[12px] leading-[22px] text-[#b4b4b4]">
                {times.map((t) => (
                  <span key={t} className="w-[107px] shrink-0 bg-[repeating-linear-gradient(90deg,#3c3c3c_0_1px,transparent_1px_21px)] bg-[length:106px_6px] bg-no-repeat">
                    <span className="block border-l border-[#3c3c3c] pl-[2px]">{t}</span>
                  </span>
                ))}
              </div>
            </div>
          </div>
          <div className="w-4 bg-[#5c5c5c]" />
        </div>
        <div className="flex min-h-0 flex-1">
          <div className="w-[15px] shrink-0 border-r-2 border-black bg-[#404040]" />
          <div className="flex min-w-0 flex-1 flex-col border-r border-[#222]">
            <div className="h-[30px] shrink-0 border-b border-[#5c5c5c]" />
            <div className="flex flex-1 flex-col items-center justify-center pt-[22px] pr-4 text-[#e4e4e4]">
              <span className="font-['Noto_Sans_CJK_SC',sans-serif] text-[21px] leading-[30px] font-light">雷特字幕</span>
              <span className="flex w-[82px] justify-between text-[10px] leading-[11px] font-bold">{Array.from("免费唱词插件").map((c) => <span key={c}>{c}</span>)}</span>
            </div>
          </div>
          <div className="flex w-4 shrink-0 flex-col">
            <button aria-label="时间线向上" className={`h-4 ${sbtn}`}><Ic w={7} h={5}><path d="M0 4h7L3.500 0z" fill="currentColor" stroke="none" /></Ic></button>
            <div className="flex-1 border border-[#111] bg-linear-to-r from-[#3c3c3c] via-[#5c5c5c] to-[#3c3c3c]" />
            <button aria-label="时间线向下" className={`h-4 ${sbtn}`}><Ic w={7} h={5}><path d="M0 0h7L3.500 4z" fill="currentColor" stroke="none" /></Ic></button>
          </div>
        </div>
        <div className="mr-4 flex h-[17px] shrink-0 border-y border-black">
          <button aria-label="时间线向左" className={`w-4 ${sbtn}`}><Ic w={5} h={7}><path d="M5 0v7L1 3.500z" fill="currentColor" stroke="none" /></Ic></button>
          <div className="flex-1 border-x border-[#111] bg-linear-to-b from-[#757575] to-[#363636]" />
          <button aria-label="时间线向右" className={`w-4 ${sbtn}`}><Ic w={5} h={7}><path d="M0 0v7l4-3.500z" fill="currentColor" stroke="none" /></Ic></button>
        </div>
      </div>
    </div>
  );
}

function SubtitleEditor() {
  return (
    <section role="dialog" aria-label="唱词编辑" className="absolute top-[65px] left-[173px] flex h-[752px] w-[1169px] flex-col border border-[#707070] bg-[#3e3e3e]">
      <div className="flex h-[18px] shrink-0 items-center border-b border-[#25265c] bg-linear-to-b from-[#5058b8] to-[#2c3390] pl-[2px] text-[#b3b8e4]">
        <Ic w={15} h={16}><rect width="15" height="16" fill="#111" stroke="none" /><path d="M1 1.500h13" stroke="#eee" strokeDasharray="2 1.500" strokeWidth={2} /><path d="M3 4.500h9M7.500 4v9" stroke="#d9a832" strokeWidth={2} /><path d="M1 15h13" stroke="#aaa" strokeWidth={2} /></Ic>
        <h2 className="ml-[3px] flex-1 font-['Roboto','Noto_Sans_CJK_SC',sans-serif] text-[13px] leading-4 whitespace-nowrap">Adobe Premiere Pro 唱词编辑 - C:\Users\92083\Desktop\Adobe Premiere Pro Captured Video\雷特教学\VisTitle LE\20181113-004251-0000.vtsubtle*</h2>
        <button aria-label="关闭" className="mr-[5px] flex h-4 w-[41px] items-center justify-center self-start rounded-b-sm bg-[#7a7a80] text-[#e0e0e0]"><Ic w={9} h={9} sw={2}><path d="M1 1l7 7M8 1L1 8" /></Ic></button>
      </div>
      <div className="flex h-[508px] shrink-0">
        <div className="ml-[9px] flex w-[689px] shrink-0 flex-col"><EditorToolbar /><SubtitleTable /></div>
        <div className="mr-[10px] ml-[9px] flex min-w-0 flex-1 flex-col"><TextToolbar /><Preview /></div>
      </div>
      <div className="mt-[5px] flex shrink-0 flex-col"><ControlBar /></div>
      <EditorTimeline />
      <Ic w={13} h={10} className="absolute top-[586px] left-[52px]"><path d="M.5.500h12L6.500 9z" fill="#3d57c0" stroke="#dfe4ff" /></Ic>
      <div role="tooltip" className="absolute top-[569px] left-[667px] h-[24px] border border-[#4a4a4a] bg-[#4c4c4c] px-1 text-[15px] leading-[22px] text-white">跳转(J)</div>
      <div className="pointer-events-none absolute top-[512px] left-[629px] h-[77px] w-[77px] rounded-full border-[6px] border-[#c0703f]/90" />
      <svg width="14" height="20" viewBox="0 0 14 20" className="pointer-events-none absolute top-[551px] left-[668px]" aria-hidden="true"><path d="M1 1v15l3.500-3.500L7 18.500l2.500-1-2.500-6h5z" fill="#fff" stroke="#000" /></svg>
    </section>
  );
}

/* ---------- floating widgets ---------- */

function RecorderWidget() {
  return (
    <div className="absolute top-[15px] right-[15px] flex items-center">
      <output className="z-10 -mr-9 flex h-[70px] w-[70px] items-center justify-center rounded-full bg-[#3b3d4c] pt-1 text-[13px] text-white">00:05:02</output>
      <div className="flex h-[43px] w-[139px] items-center justify-end gap-4 rounded-r-full bg-[#1e202c] pt-[3px] pr-[14px] text-white">
        <button aria-label="暂停"><Ic w={15} h={15}><path d="M0 0h5v15H0zM10 0h5v15h-5z" fill="currentColor" stroke="none" /></Ic></button>
        <button aria-label="停止"><Ic w={13} h={13}><path d="M0 0h13v13H0z" fill="currentColor" stroke="none" /></Ic></button>
        <button aria-label="画笔"><Ic w={14} h={14}><path d="M0 14l1.500-5L8 2.500l3.500 3.500L5 12.500zM9 1.500L10.500 0 14 3.500 12.500 5z" fill="currentColor" stroke="none" /></Ic></button>
      </div>
    </div>
  );
}

/* ---------- taskbar ---------- */

const adobe: Record<string, string> = {
  Ai: "border-[#f08a1d] bg-[#2b1604] text-[#f08a1d]",
  Ps: "border-[#1fb4d8] bg-[#04202c] text-[#1fb4d8]",
  Lr: "border-[#a9c9dc] bg-[#10242f] text-[#a9c9dc]",
  Ae: "border-[#a77be8] bg-[#1c0a3a] text-[#b48cf0]",
  Pr: "border-[#d64fd6] bg-[#2c0630] text-[#d97ae0]",
};
const Adobe = ({ n }: { n: string }) => <span className={`flex h-[27px] w-7 items-center justify-center border-2 text-[15px] leading-none font-medium ${adobe[n]}`}>{n}</span>;

function Taskbar() {
  const apps: { name: string; icon: ReactNode; active?: boolean; lit?: boolean }[] = [
    { name: "此电脑", icon: <Ic w={28} h={28}><path d="M8 2l18 5v14L8 16z" fill="#3c9fe8" stroke="#9ad0f5" /><path d="M2 20l8-2 12 4-7 4zM1 24l7-1 6 3-4 2z" fill="#cfd8df" stroke="none" /></Ic> },
    { name: "Internet Explorer", icon: <Ic w={30} h={28}><path d="M7 15h17c0-5-3-9-8.500-9S7 10 7 15s3 9 8.500 9c3.500 0 6-1.500 7.500-4" stroke="#63c6f0" strokeWidth={4} /><path d="M3 26C-1 20 14 2 25 2c4 0 2 5 0 8" stroke="#f0c231" strokeWidth={2} /></Ic> },
    { name: "Edge", icon: <Ic w={26} h={28}><path d="M1 12C3 3 10 0 15 1c7 1 10 6 10 14H9c0 9 9 9 14 5v6c-8 4-20 1-20-9 0-4 3-7 6-8-4 0-6 1-8 3zM9 11h9c0-6-8-6-9 0z" fill="#1678d3" stroke="none" /></Ic> },
    { name: "猎豹浏览器", active: true, icon: <Ic w={26} h={26}><circle cx="13" cy="13" r="13" fill="#e27a30" stroke="none" /><path d="M2 9c6-7 14-7 19-3l3 6-4 2-4-2c-3 0-4 2-3 5l3 4c-5-1-7-4-6-8-3-1-6 0-8 3z" fill="#fff2e8" stroke="none" /></Ic> },
    { name: "Illustrator", icon: <Adobe n="Ai" /> },
    { name: "Photoshop", icon: <Adobe n="Ps" /> },
    { name: "Lightroom", icon: <Adobe n="Lr" /> },
    { name: "After Effects", icon: <Adobe n="Ae" /> },
    { name: "Premiere Pro", icon: <Adobe n="Pr" />, active: true, lit: true },
    { name: "CorelDRAW", icon: <Ic w={28} h={30}><path d="M0 0h14c8 0 14 6 14 13 0 8-6 15-10 17H0z" fill="#8bbf3f" stroke="none" /><path d="M0 2l6-2 11 17 1 7-7-3L0 8z" fill="#fff" stroke="#49651f" /><path d="M4 1l10 17" stroke="#49651f" /><path d="M14 22l4 2-1-5z" fill="#333" stroke="none" /></Ic> },
    { name: "图层", icon: <Ic w={28} h={30}><path d="M14 0l13 7v16l-13 7-13-7V7z" fill="#33343f" stroke="none" /><path d="M14 10l9 6-9 8-9-8z" fill="#5264e0" stroke="none" /><path d="M14 8l8 5-8 6-8-6z" fill="#3f8fe8" stroke="none" /><path d="M14 3l8 6-8 5-8-5z" fill="#23d3c4" stroke="none" /></Ic> },
    { name: "Capture One", icon: <span className="flex h-7 w-7 items-center justify-center rounded-full border-2 border-[#58b2d8] bg-[#eef7fb] font-['Liberation_Serif',serif] text-[24px] leading-none font-bold text-[#2b8fc0]">1</span> },
    { name: "Picasa", icon: <span className="flex h-7 w-7 items-center justify-center rounded-full border-2 border-[#8d8d8d] bg-[conic-gradient(#f2d04a_0_16%,#ee8440_16%_33%,#d8584e_33%_50%,#b28ad0_50%_66%,#4f8fd8_66%_83%,#68b85a_83%)]"><span className="h-2 w-2 rounded-full bg-[#111]" /></span> },
    { name: "几何", icon: <Ic w={28} h={28}><circle cx="14" cy="14" r="13" fill="#1888b4" stroke="#6cc6e4" strokeWidth={2} /><g stroke="#a8e0f2"><circle cx="14" cy="9" r="6" /><circle cx="14" cy="19" r="6" /><circle cx="9" cy="14" r="6" /><circle cx="19" cy="14" r="6" /></g></Ic> },
    { name: "录屏", active: true, lit: true, icon: <span className="flex h-[30px] w-[30px] items-center justify-center bg-linear-to-b from-[#1565c8] to-[#1d78e4] text-white"><Ic w={24} h={14} sw={2}><rect x="5" y="1" width="13" height="12" /><path d="M10 4v6l4-3z" fill="currentColor" stroke="none" /><path d="M23 3v9l-3-2V5z" fill="currentColor" stroke="none" /><path d="M0 0c4 4 4 10 0 14" strokeWidth={1.500} /></Ic></span> },
  ];
  return (
    <footer className="flex h-[50px] shrink-0 items-center bg-linear-to-r from-[#101112] via-[#21130c] to-[#1d110c] text-white">
      <button aria-label="开始" className="flex w-[60px] justify-center"><Ic w={20} h={20}><path d="M0 3l9-1.300V9.500H0zM10 1.500L20 0v9.500H10zM0 10.500h9v8L0 17.300zM10 10.500h10V20l-10-1.400z" fill="currentColor" stroke="none" /></Ic></button>
      <button aria-label="Cortana" className="flex w-[60px] justify-center"><Ic w={20} h={20} sw={2.500}><circle cx="10" cy="10" r="8.500" /></Ic></button>
      <button aria-label="任务视图" className="flex w-[60px] justify-center"><Ic w={20} h={20} sw={1.500}><path d="M1 0v3h12V0M1 20v-3h12v3M1 6h12v8H1zM18 0v3M18 6v3M18 12v8" /></Ic></button>
      <div className="mx-[6px] h-6 w-1 border-x border-[#4a4a4a]" />
      <div className="ml-[7px] flex h-full">
        {apps.map((a) => (
          <button key={a.name} aria-label={a.name} className={`flex h-full w-[62px] items-center justify-center ${a.active ? "border-b-[3px] border-[#6db56d] pt-[3px]" : ""} ${a.lit ? "bg-[#4a4644]/80" : ""}`}>{a.icon}</button>
        ))}
      </div>
      <div className="ml-auto flex items-center gap-3">
        <Ic w={12} h={22}><rect x="2" y="0" width="8" height="5" fill="#ccc" stroke="none" /><rect y="5" width="12" height="17" rx="1" fill="#34a834" stroke="none" /><path d="M6 8v12M3 12l3 3 3-3" stroke="#fff" /></Ic>
        <button aria-label="显示隐藏的图标"><Ic w={16} h={10} sw={1.500}><path d="M0 9l8-8 8 8" /></Ic></button>
        <Ic w={14} h={22}><ellipse cx="7" cy="12" rx="6" ry="9" fill="#111" stroke="none" /><ellipse cx="7" cy="15" rx="4.500" ry="6" fill="#fff" stroke="none" /><path d="M1 9c4 3 8 3 12 0v3c-4 2-8 2-12 0z" fill="#d8262c" stroke="none" /><path d="M4 5h2v2H4zM8 5h2v2H8z" fill="#fff" stroke="none" /><path d="M2 21h10" stroke="#e5a021" strokeWidth={2} /></Ic>
        <Ic w={21} h={21}><circle cx="10.500" cy="10.500" r="10" fill="#b4d326" stroke="none" /><path d="M10.500.5a10 10 0 0 0 0 20z" fill="#e6dc3a" stroke="none" /><path d="M10.500 5v11M5 10.500h11" stroke="#1b6c1b" strokeWidth={3.500} /></Ic>
        <Ic w={17} h={17} sw={1.500}><path d="M1 15A14 14 0 0 1 15 2M5 16A11 11 0 0 1 16 6M9 16a7 7 0 0 1 7-6" /><circle cx="14" cy="15" r="1.500" fill="currentColor" /></Ic>
        <Ic w={21} h={14}><rect x="7" y="5" width="10" height="6" fill="currentColor" /><path d="M5.500 2.500h13v11h-13zM20 6v4M0 3h4v3H1V3M1 0v3M3 0v3M2 6v4h3" /></Ic>
        <Ic w={21} h={18}><path d="M1 6.500h3l5-5v15l-5-5H1zM12 6q2 3 0 6M14.500 4q4 5 0 10M17 2q6 7 0 14" /></Ic>
        <span className="text-[15px]">中</span>
        <span className="mr-2 ml-2 flex h-5 w-5 items-center justify-center rounded-sm bg-[#e2572b] text-[18px] leading-none font-bold italic">S</span>
        <time className="text-center text-[15px] leading-[23px]">0:45<br />2018/11/13</time>
        <button aria-label="通知" className="relative mr-[22px] ml-3">
          <Ic w={21} h={20}><path d="M0 0h20v17H8l-4 3v-3H0z" fill="currentColor" stroke="none" /><path d="M4 4.500h12M4 8.500h12M4 12.500h8" stroke="#222" strokeWidth={1.500} /></Ic>
          <span className="absolute -right-[9px] -bottom-[10px] flex h-5 w-5 items-center justify-center rounded-full border border-[#999] bg-[#333] text-[13px] font-bold">1</span>
        </button>
        <div className="-ml-3 h-[50px] w-[6px] border-l border-[#6a6a6a]" />
      </div>
    </footer>
  );
}

export default function App() {
  return (
    <div className={`relative flex h-screen flex-col overflow-hidden bg-[#171717] ${UI}`}>
      <TitleBar />
      <WorkspaceBar />
      <main className="flex min-h-0 flex-1 flex-col gap-[5px]">
        <div className="flex min-h-0 flex-[519] gap-[5px]"><EffectControls /><ProgramMonitor /></div>
        <div className="flex min-h-0 flex-[370] gap-[6px]"><ProjectPanel /><ToolsPanel /><TimelinePanel /><AudioMeters /></div>
      </main>
      <div className="mt-[3px] flex h-[25px] shrink-0 items-center bg-[#262626] pl-1 text-[#8f8f8f]">
        <Ic w={19} h={15} sw={1.500}><rect x="1" y="1" width="17" height="13" rx="6.500" /><circle cx="6.500" cy="8.500" r="3" /><path d="M6 5.500c3-3 8-2 8.500 2 0 3-4 4.500-6 2L6.500 8" /></Ic>
      </div>
      <Taskbar />
      <SubtitleEditor />
      <RecorderWidget />
      <div className="absolute top-[80px] right-0 flex h-8 w-[43px] overflow-hidden rounded-l bg-[#4f8ff0] text-white">
        <Ic w={38} h={32} sw={3}><circle cx="19" cy="11" r="4.500" /><circle cx="12.500" cy="19" r="4.500" /><circle cx="25.500" cy="19" r="4.500" /></Ic>
        <div className="flex-1 bg-[#dce9fb]" />
      </div>
      <div className="absolute top-[647px] -right-[34px] h-[58px] w-[58px] rounded-full border-2 border-white bg-linear-to-b from-[#4cc060] to-[#3bb04e] pt-[18px] pl-[5px] text-[14px] leading-5 font-bold text-white">53</div>
    </div>
  );
}
